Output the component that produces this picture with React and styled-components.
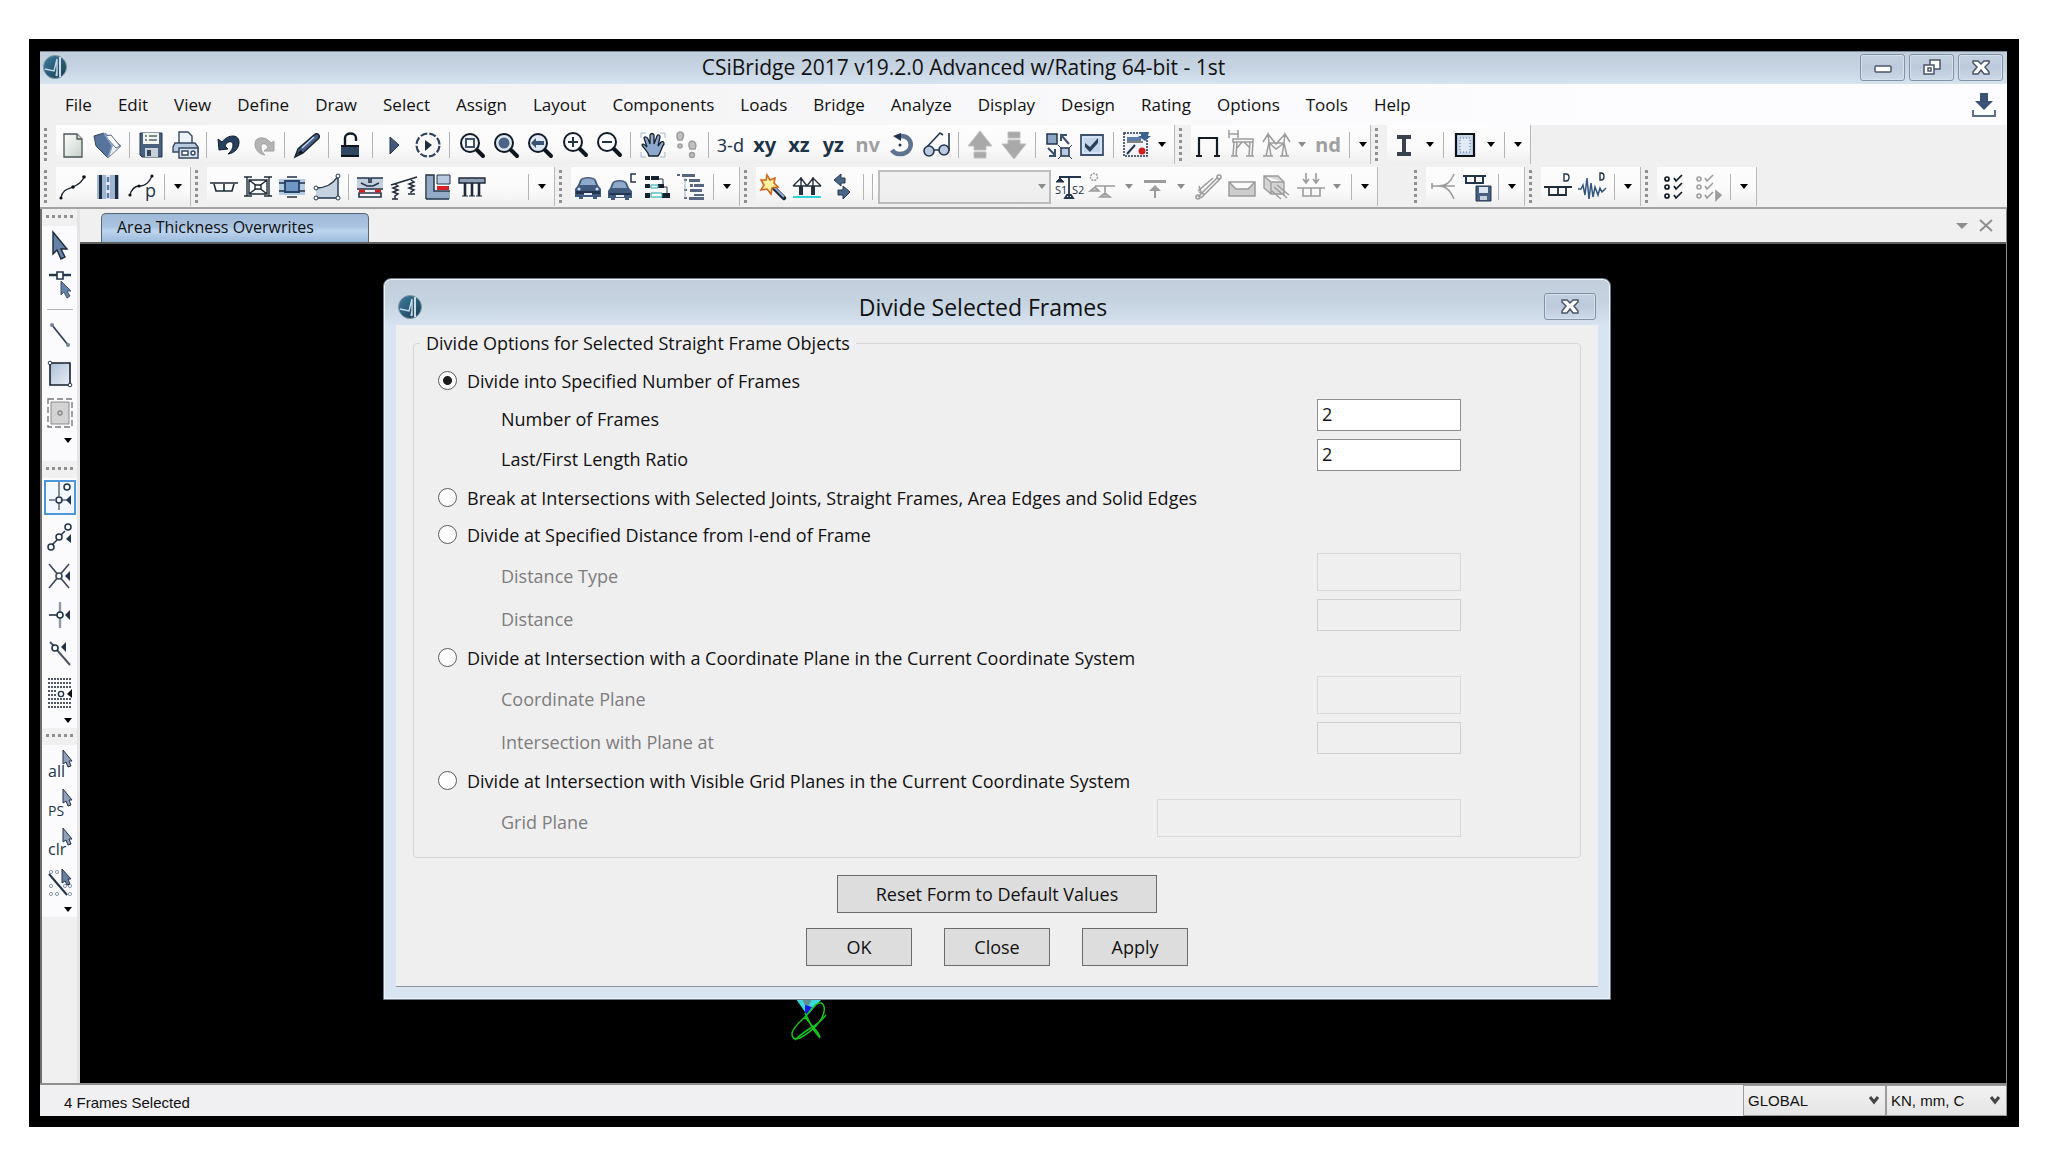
import { useState } from 'react'
import styled, { createGlobalStyle, css } from 'styled-components'

const ink = '#22344a'
const steel = '#5f7fa8'
const pale = '#b9cbe0'
const grey = '#9c9c9c'

const uiFont = '"Open Sans", "Noto Sans", sans-serif'

// Every icon is drawn on a 26 x 26 grid
const icons = {
    newFile: <g stroke="#4b5358" strokeWidth="1.3"><path d="M4 2h13l5 5v18H4z" fill="url(#paper)" /><path d="M17 2v5h5" fill="#cfdbd2" /></g>,
    open: <g><path d="M11 1l16 13-13 12z" fill="#e9eff7" stroke="#6d7f96" /><path d="M17 3l9 11-4 2-11-12z" fill="#f8fafd" stroke="#56687f" /><path d="M0 4l10-3 8 13-4 12L2 14z" fill="#56749c" stroke="#33475f" /><path d="M10 1l8 13-4 12" fill="none" stroke="#8ea8c9" strokeWidth="1.4" /></g>,
    save: <g><path d="M2 1h22v24H4l-2-2z" fill="#48617f" stroke={ink} /><path d="M5 1h16v11H5z" fill="#f2f5ee" /><path d="M7 4h2M11 4h8M7 8h2M11 8h8" stroke="#55656e" strokeWidth="1.4" /><path d="M7 16h13v9H7z" fill="#c8d0d8" /><path d="M9 18h4v6H9z" fill="#34475f" /></g>,
    print: <g stroke="#34475f" strokeWidth="1.4"><path d="M7 0h9l4 4v8H7z" fill="#eef3fa" /><path d="M3 11h20l3 4v5H1v-5z" fill={pale} /><path d="M7 16h19v10H7z" fill="#dbe3ee" /><path d="M10 19h6v4h-6z" fill="#fff" /><circle cx="21" cy="21" r="2" fill="#fff" /></g>,
    undo: <path d="M2 7l1 11 9-1-3-3c2-5 8-6 8-1 0 4-2 6-5 9 7-1 11-6 11-12 0-8-11-8-17 0z" fill="#25415f" stroke="#111b27" />,
    redo: <path d="M24 9l0 10-10 0 4-3c-1-5-7-6-7-1 0 4 2 6 4 8-6-1-10-5-10-11 0-8 11-8 16-1z" fill="#b4b4b4" stroke="#a0a0a0" />,
    pen: <g><path d="M1 25l3-8L20 3c4-3 7 1 4 4L9 21z" fill="#435f85" stroke="#18222f" strokeWidth="1.5" /><path d="M8 16L20 5" stroke="#c2d3e8" strokeWidth="1.5" /><path d="M3 22l4-4 2 3z" fill="#111" /></g>,
    lock: <g><path d="M8 13V6c0-6 11-6 11 0v3" fill="none" stroke="#111b27" strokeWidth="2.4" /><path d="M4 13h18v12H4z" fill="#2f4763" /><path d="M4 13h18v2H4zM4 23h18v2H4z" fill="#0d141c" /></g>,
    play: <path d="M9 5l9 8-9 9z" fill="#42597a" stroke={ink} />,
    run: <g><circle cx="13" cy="13" r="11.5" fill="none" stroke="#30435c" strokeWidth="2.2" strokeDasharray="7 2.03" strokeDashoffset="-1" /><path d="M10 8l7 5-7 6z" fill="#1d2c3f" /></g>,
    zoomRect: <g><circle cx="11" cy="11" r="9" fill="#eef2f6" stroke="#111b27" strokeWidth="2" /><path d="M7 7h8v8H7z" fill="#fff" stroke="#40526a" strokeWidth="2" /><path d="M18 18l6 6" stroke="#0e161f" strokeWidth="4" strokeLinecap="round" /></g>,
    zoomFull: <g><circle cx="11" cy="11" r="9" fill="#dfe8f2" stroke="#111b27" strokeWidth="2" /><circle cx="11" cy="11" r="5.5" fill="#4c6587" /><path d="M18 18l6 6" stroke="#0e161f" strokeWidth="4" strokeLinecap="round" /></g>,
    zoomBack: <g><circle cx="11" cy="11" r="9" fill="#dfe8f2" stroke="#111b27" strokeWidth="2" /><path d="M4 11l5-5v3h8v4H9v3z" fill="#3c5270" /><path d="M18 18l6 6" stroke="#0e161f" strokeWidth="4" strokeLinecap="round" /></g>,
    zoomIn: <g><circle cx="11" cy="10" r="9" fill="#fafcff" stroke="#111b27" strokeWidth="2" /><path d="M6 10h10M11 5v10" stroke={ink} strokeWidth="2" /><path d="M18 17l6 6" stroke="#0e161f" strokeWidth="4" strokeLinecap="round" /></g>,
    zoomOut: <g><circle cx="11" cy="10" r="9" fill="#fafcff" stroke="#111b27" strokeWidth="2" /><path d="M6 10h10" stroke={ink} strokeWidth="2" /><path d="M18 17l6 6" stroke="#0e161f" strokeWidth="4" strokeLinecap="round" /></g>,
    hand: <g><path d="M1 6V1h5M20 1h5v5M25 20v5h-5M6 25H1v-5" fill="none" stroke="#a9b8cc" /><path d="M9 24c-1-5-5-7-7-11 1-2 3 0 5 2L4 6c1-2 3-1 4 1l2 5V3c1-2 3-2 4 0v9l3-8c1-2 3-1 3 1l-2 9 3-4c2-1 3 0 3 2-3 4-3 9-6 12z" fill="#8fa9cc" stroke="#16212e" strokeWidth="1.3" /></g>,
    feet: <g fill="#c0c0c0" stroke="#9f9f9f" strokeWidth="1.6"><path d="M4 8c-2-4-1-8 2-8s5 2 2 8z" /><circle cx="6" cy="14" r="2" /><path d="M16 17c-2-4-1-8 2-8s5 3 3 8z" /><circle cx="18" cy="23" r="2.4" /></g>,
    rotate: <g fill="none"><path d="M11 4c15-1 14 19-1 18-3 0-5-1-7-4" stroke="#5d7390" strokeWidth="4.5" /><path d="M4 4l8-3v8z" fill={ink} /><circle cx="11" cy="13" r="1.5" fill={ink} /></g>,
    glasses: <g stroke="#26364a" strokeWidth="1.6"><path d="M2 17L17 1l3 2M26 1v18M11 18h5" fill="none" /><circle cx="6" cy="19" r="5" fill={pale} /><circle cx="21" cy="18" r="5" fill={pale} /></g>,
    up: <path d="M13-1l12 15h-6v4H7v-4H1zM7 20h12v6H7z" fill="#a9a9a9" stroke="#bdbdbd" />,
    down: <path d="M13 27L1 12h6V8h12v4h6zM7 0h12v6H7z" fill="#a9a9a9" stroke="#bdbdbd" />,
    shrink: <g><path d="M2 2h10v10H2z" fill="#8ea6c5" stroke={ink} strokeWidth="1.5" /><path d="M16 16h8v8h-8z" fill={pale} stroke={ink} strokeWidth="1.5" /><path d="M13 13l3 3M27 13l-3 3M13 27l3-3M27 27l-3-3" stroke={ink} /><path d="M24 12l-7-8M16 9V3h6M3 16l7 7M10 17v7H4" fill="none" stroke="#3c4f68" strokeWidth="2" /></g>,
    check: <g><path d="M2 3h22v20H2z" fill="#c3d5ea" stroke="#3c516d" strokeWidth="1.8" /><path d="M4 5h18v16H4z" fill="none" stroke="#e6eff9" /><path d="M6 11l5 4 8-9v5l-8 9-5-5z" fill="#2c3f58" /></g>,
    assign: <g><path d="M1 1h23v23H1z" fill="#f2f5f9" stroke={ink} strokeWidth="1.5" strokeDasharray="2 1" /><path d="M4 5h14v4H4z" fill={steel} /><path d="M4 10h16" stroke="#111" /><path d="M4 22l8-9" stroke={ink} strokeWidth="2" /><path d="M18 0h8l-1 4h3l-6 5-7-5h3z" fill="#3e628e" /><circle cx="19" cy="19" r="3.5" fill="#cf1f22" /></g>,
    portal: <path d="M1 24h6M4 24V6h18v18M19 24h6" fill="none" stroke="#141c26" strokeWidth="2.2" />,
    portalDim: <g fill="none" stroke={grey} strokeWidth="1.5"><path d="M0-2v8M9-2v8M0 2h9M4 7h20v3H4zM5 10L4 24M8 10L7 24M21 10l-1 14M24 10l-1 14M2 24h7M17 24h8M8 16l5-6M21 16l-6-6" /></g>,
    portalTriangles: <g fill="none" stroke={grey} strokeWidth="1.5"><path d="M0 10L5 2l1 9 7 6 8-6 1-9 5 8M5 2l8 10L22 2M6 11L3 24M6 11l2 13M21 11l-2 13M21 11l3 13M0 24h10M17 24h9M6 11h15" /></g>,
    section: <path d="M6 3h14v4h-5v13h5v4H6v-4h5V7H6z" fill="#39424c" />,
    rebar: <g><path d="M4 2h18v22H4z" fill="#c8d6ea" stroke="#0d1219" strokeWidth="2.2" /><path d="M8 6h10v14H8z" fill="#e1e9f4" stroke="#56708f" strokeDasharray="1 2" /></g>,
    layoutLine: <g><path d="M1 24c1-9 8-9 12-11s9-4 11-10" fill="none" stroke="#1a232e" strokeWidth="1.3" /><circle cx="1" cy="24" r="1.6" fill="#111" /><circle cx="13" cy="13" r="1.8" fill="#111" /><circle cx="24" cy="3" r="1.8" fill="#111" /></g>,
    lane: <g><path d="M2 1h22v24H2z" fill="#9eb5d3" /><path d="M4 1h3v24H4zM20 1h3v24h-3z" fill="#1d2b3c" /><path d="M13 1v24" stroke="#dfe8f3" strokeWidth="4" /><path d="M13 3v21" stroke="#5c7aa2" strokeWidth="2.4" strokeDasharray="5 3" /></g>,
    parametric: <g><path d="M1 21c2-8 6-9 10-9s9-3 12-10" fill="none" stroke="#1a232e" strokeWidth="1.3" /><circle cx="1" cy="21" r="1.6" fill="#111" /><circle cx="10" cy="12" r="1.6" fill="#111" /><circle cx="23" cy="2" r="1.6" fill="#111" /><text x="16" y="23" fontSize="18" fill={ink}>p</text></g>,
    deck: <path d="M-1 9h28M3 10l2 7h16l2-7M13 10v7" fill="none" stroke="#1f2b39" strokeWidth="1.6" />,
    diaphragm: <g fill="none" stroke="#1f2b39" strokeWidth="1.4"><path d="M-1 3h8M19 3h8M-1 22h8M19 22h8M2 3v19M24 3v19M4 6h18v14H4zM4 6l18 14M22 6L4 20" /><path d="M10 11h6v4h-6z" fill="#fff" /></g>,
    restrainer: <g><path d="M0 5h26v16H0z" fill="#b3cbe5" /><path d="M6 7h14v11H6z" fill="#6f96c4" stroke="#274262" strokeWidth="1.8" /><path d="M8 3h10M8 23h10M0 9h6M20 9h6M0 17h6M20 17h6" stroke="#223247" strokeWidth="1.6" /></g>,
    variation: <g><path d="M2 14c9 0 17-4 22-12v22H2z" fill="#c6d2e0" /><path d="M2 14c9 0 17-4 22-12M24 2v22M2 24h22" fill="none" stroke={ink} strokeWidth="1.4" /><circle cx="2" cy="14" r="2" fill="#fff" stroke={ink} /><circle cx="24" cy="2" r="2" fill="#fff" stroke={ink} /><circle cx="2" cy="24" r="2" fill="#fff" stroke={ink} /><circle cx="24" cy="24" r="2" fill="#fff" stroke={ink} /></g>,
    bearing: <g><path d="M0 4h26v11H0z" fill="#c3cfdd" /><path d="M0 4h12v5M26 4H14v5M0 15h26M2 19h22v4H2z" fill="none" stroke={ink} strokeWidth="1.6" /><path d="M4 9l6 3h6l6-3" fill="none" stroke={ink} strokeWidth="1.6" /><path d="M2 17h6M18 17h6" stroke="#cf2128" strokeWidth="3" /></g>,
    spring: <g fill="none" stroke="#1f2b39" strokeWidth="1.5"><path d="M0 11L26 3M4 10l3 2-5 2 5 2-5 2 5 2-3 2v3M20 6l3 2-5 2 5 2-5 2 5 2-3 2v1M1 25h6M17 20h7" /></g>,
    abutment: <g><path d="M2 1h7v16h16v8H2z" fill="#93aac6" /><path d="M1 25V1h8v16h16M1 25h23" fill="none" stroke={ink} strokeWidth="1.5" /><path d="M12 1h13v9H12z" fill={pale} stroke={ink} /><path d="M12 14h12" stroke="#d62128" strokeWidth="4" /></g>,
    bent: <g><path d="M0 4h26v5H0z" fill="#8fa0b5" stroke="#1c2938" strokeWidth="1.4" /><path d="M6 9v13M13 9v13M20 9v13" stroke="#1f2b39" strokeWidth="2.6" /><path d="M3 22h6M10 22h6M17 22h6" stroke="#1f2b39" /></g>,
    car: <g><path d="M5 6c2-4 14-4 16 0l2 5 3 4v8h-4v2h-4v-2H8v2H4v-2H0v-8l3-4z" fill="#405a7d" /><path d="M7 6c2-2 10-2 12 0l2 5H5z" fill="#8fa9cb" /><path d="M1 17h24v3H1z" fill="#24364d" /><path d="M9 19h8v2H9z" fill="#e6edf6" /><circle cx="4" cy="15" r="1.5" fill="#cfe0f4" /><circle cx="22" cy="15" r="1.5" fill="#cfe0f4" /></g>,
    carClass: <g><path d="M3 9c2-4 13-4 15 0l2 5 3 3v7h-3v2h-4v-2H6v2H2v-2h-3v-7l2-3z" fill="#405a7d" /><path d="M5 9c2-2 9-2 11 0l2 5H3z" fill="#8fa9cb" /><path d="M0 19h22v2H0z" fill="#24364d" /><path d="M7 21h8v2H7z" fill="#e6edf6" /><path d="M27 0h-5v8h5" fill="none" stroke={ink} strokeWidth="1.5" /></g>,
    cases: <g fill="#18222e"><path d="M1 2h5v4H1zM7 2h8v4H7zM1 10h5v4H1zM14 10h6v4h-6zM1 19h5v5H1zM18 19h8v5h-8z" /><path d="M7 11h7v3H7zM7 19h11v4H7z" fill="#fff" stroke="#12a5a8" /><path d="M15 5h4v5M20 13h3v6" fill="none" stroke={ink} /></g>,
    tree: <g fill="#56687f"><path d="M-1 0h3v2h-3zM4 0h13v3H4zM6 5h3v2H6zM11 5h11v3H11zM12 10h3v3h-3zM16 10h10v3H16zM6 15h3v2H6zM12 15h12v3H12zM6 23h3v2H6zM16 20h10v2H16zM11 23h15v3H11z" /><path d="M7 4v20" stroke="#9db0c9" fill="none" /></g>,
    wand: <g><path d="M13 13l11 11" stroke="#1a2737" strokeWidth="4.5" strokeLinecap="round" /><path d="M14 13l10 10" stroke="#92a8cd" strokeWidth="2" /><path d="M7 1l3 5 5-2-1 5 4 4-6 1-1 6-4-5-6 1 3-5-3-5 5 0z" fill="#fff0a0" stroke="#d2641c" strokeWidth="1.6" /></g>,
    bridge: <g fill="none" stroke="#26303b" strokeWidth="1.4"><path d="M-1 12h28M-1 12l8-8 6 8 6-8 8 8M7 3v9M19 3v9" /><path d="M6 12v9M8 12v9M18 12v9M20 12v9" strokeWidth="2" /><path d="M-1 23h28" stroke="#2fd3d8" strokeWidth="2" /></g>,
    swap: <path d="M5 6l7-6v4h4v5h-4v3zM21 18l-7-6v4H9v5h5v4z" fill="#4d6789" stroke="#25364b" />,
    balance: <g stroke={ink} fill={ink}><path d="M4 3h22M14 3v20M10 24h8l-2-3h-4z" fill="none" strokeWidth="1.8" /><path d="M1 8l4-4 4 4z" /><text x="0" y="20" fontSize="11" strokeWidth="0">S1</text><text x="17" y="20" fontSize="11" strokeWidth="0">S2</text></g>,
    loadNew: <g stroke={grey} fill="none" strokeWidth="1.6"><circle cx="5" cy="3" r="3.5" strokeDasharray="2 1" /><path d="M6 12h20M16 12v9M1 17l5-4 4 4zM11 23h10l-5-4z" fill="#bcbcbc" /></g>,
    loadUp: <g fill={grey}><path d="M2 6h22v3H2zM13 11l6 6h-5v7h-2v-7H7z" /></g>,
    tendon: <g fill="none" stroke={grey} strokeWidth="1.6"><path d="M3 23L23 3M6 24L25 5M4 12l2 6M3 17l15-13M4 18l5 2" /><circle cx="24" cy="3" r="2" /><circle cx="3" cy="23" r="2" /></g>,
    envelope: <g fill="#cdcdcd" stroke={grey} strokeWidth="1.5"><path d="M0 8h26v14H0zM0 8l7 7h12l7-7" /></g>,
    box: <g fill="#d5d5d5" stroke={grey} strokeWidth="1.4"><path d="M1 2h14l6 6v12H8l-7-6zM1 2l7 6h13M8 8v12M11 13l13 11M14 11l12 10M9 17l9 8" /></g>,
    boxLoad: <path d="M8-1v9M18-1v9M5 5l3 4 3-4M15 5l3 4 3-4M-1 14h28M5 14v8h17v-8M13 14v8" fill="none" stroke={grey} strokeWidth="1.6" />,
    flow: <path d="M2 12h23M2 9v6M8 12c8 0 12-3 16-12M8 12c8 0 12 4 16 13" fill="none" stroke={grey} strokeWidth="1.6" />,
    saveBridge: <g><path d="M-1 2h23M2 2v7h17V2M11 2v7" fill="none" stroke={ink} strokeWidth="2" /><path d="M12 12h15v15H12z" fill="#48617f" stroke={ink} /><path d="M15 13h9v6h-9z" fill="#dbe6f3" /><path d="M16 22h7v4h-7z" fill="#c3d0df" /></g>,
    deckD: <g><path d="M-1 13h28M4 13v8h17v-8M13 13v8" fill="none" stroke="#1f2b39" strokeWidth="1.8" /><path d="M19 0h2c4 0 4 7 0 7h-2z" fill="none" stroke={ink} strokeWidth="1.4" /></g>,
    waveD: <g fill="none"><path d="M-1 15h3l2-4 2 10 2-17 2 21 2-16 2 14 2-10 3 8 2-7 2 4 4-4" stroke="#33557f" strokeWidth="1.5" /><path d="M21-1h1c4 0 4 7 0 7h-1z" stroke={ink} strokeWidth="1.4" /></g>,
    checks: <g fill="none" stroke="#0f1720" strokeWidth="1.7"><circle cx="6" cy="5" r="2" /><circle cx="6" cy="13" r="2" /><circle cx="6" cy="22" r="2" /><path d="M13 4l2 3 6-6M13 12l2 3 6-6M13 21l2 3 6-6" /></g>,
    checksRun: <g fill="none" stroke={grey} strokeWidth="1.6"><circle cx="4" cy="5" r="2" /><circle cx="4" cy="13" r="2" /><circle cx="4" cy="22" r="2" /><path d="M10 4l2 3 6-6M10 12l2 3 6-6M10 21l2 3 6-6" /><path d="M21 17l5 4-5 5z" fill={grey} /></g>,
    // side rail
    pointer: <path d="M6-1v22l4-4 4 9 4-2-4-8h6z" fill="#6782a8" stroke="#1c2a3b" strokeWidth="1.4" />,
    reshape: <g><path d="M2 3h22" stroke={ink} strokeWidth="2.4" /><path d="M10 0h6v7h-6z" fill="#fff" stroke={ink} strokeWidth="1.6" /><path d="M14 9v14l3-3 3 6 3-2-3-5h4z" fill="#6782a8" stroke="#40536d" /></g>,
    line: <g><path d="M5 3l16 20" stroke="#34425a" strokeWidth="1.8" /><circle cx="5" cy="3" r="2" fill="#76859d" /><circle cx="21" cy="23" r="2" fill="#76859d" /></g>,
    area: <g><path d="M3 2h20v22H3z" fill="url(#areaFill)" stroke="#16202c" strokeWidth="1.6" /><circle cx="3" cy="2" r="1.8" fill="#fff" stroke={ink} /><circle cx="23" cy="24" r="1.8" fill="#fff" stroke={ink} /></g>,
    areaQuick: <g><path d="M1-1h24v28H1z" fill="none" stroke="#777" strokeWidth="1.4" strokeDasharray="6 3" /><path d="M4 2h18v22H4z" fill="#d3d3d3" stroke="#8a8a8a" /><circle cx="13" cy="13" r="2" fill="none" stroke="#888" strokeWidth="1.4" /></g>,
    snapPoint: <g fill="none" stroke={ink} strokeWidth="1.5"><path d="M12-3v14M12 18v7M2 15h6M15 15h5" stroke="#5f6b7b" /><circle cx="12" cy="15" r="3" /><circle cx="20" cy="2" r="3" /><path d="M24 10v10l-5-5z" fill={ink} stroke="none" /></g>,
    snapEnds: <g fill="none" stroke={ink} strokeWidth="1.5"><path d="M5 21l5-5M14 11l4-4" /><circle cx="4" cy="23" r="3" /><circle cx="12" cy="13" r="3" /><circle cx="21" cy="3" r="3" /><path d="M24 10v9l-5-4z" fill={ink} stroke="none" /></g>,
    snapCross: <g fill="none" stroke="#3c4757" strokeWidth="1.6"><path d="M2 1l20 24M22 1L2 25" /><circle cx="12" cy="13" r="3" fill="#fff" /><path d="M23 8v10l-5-5z" fill={ink} stroke="none" /></g>,
    snapPerp: <g fill="none" stroke={ink} strokeWidth="1.6"><path d="M13 0v26" stroke="#8f99a8" strokeWidth="2.4" /><path d="M2 13h9" /><circle cx="13" cy="13" r="3" fill="#fff" /><path d="M23 8v10l-5-5z" fill={ink} stroke="none" /></g>,
    snapLine: <g fill="none" stroke={ink} strokeWidth="1.6"><path d="M3 1l4 4M10 9l13 15" stroke="#4b5766" strokeWidth="2" /><circle cx="8" cy="7" r="3" fill="#fff" /><path d="M19 1v10l-5-5z" fill={ink} stroke="none" /></g>,
    snapGrid: <g><path d="M1-1h24M1 3h24M1 7h24M1 11h24M1 15h24M1 19h24M1 23h24M1 27h24" stroke="#1a232e" strokeWidth="1.4" strokeDasharray="2 1" /><path d="M10 9h15v9H10z" fill="#fff" /><circle cx="14" cy="14" r="2.6" fill="none" stroke={ink} strokeWidth="1.4" /><path d="M25 9v9l-5-4z" fill="#111" /></g>,
    selAll: <g><text x="1" y="25" fontSize="16" fill={ink}>all</text><path d="M16-2v14l3-2 2 5 3-1-2-5h3z" fill="#8fa0b8" stroke={ink} /></g>,
    selPs: <g><text x="1" y="25" fontSize="14" fill={ink}>PS</text><path d="M16-2v14l3-2 2 5 3-1-2-5h3z" fill="#8fa0b8" stroke={ink} /></g>,
    selClr: <g><text x="1" y="25" fontSize="16" fill={ink}>clr</text><path d="M16-2v14l3-2 2 5 3-1-2-5h3z" fill="#8fa0b8" stroke={ink} /></g>,
    selLine: <g><g fill="none" stroke="#8b97a8"><circle cx="4" cy="3" r="1.6" /><circle cx="10" cy="3" r="1.6" /><circle cx="4" cy="17" r="1.6" /><circle cx="4" cy="25" r="1.6" /><circle cx="10" cy="25" r="1.6" /><circle cx="18" cy="17" r="1.6" /><circle cx="23" cy="17" r="1.6" /><circle cx="23" cy="25" r="1.6" /></g><path d="M2 5l18 21" stroke={ink} strokeWidth="2" /><path d="M15 0v14l3-2 2 4 3-1-2-5h3z" fill="#6a7f9e" stroke={ink} /></g>,
}

const menus = ['File', 'Edit', 'View', 'Define', 'Draw', 'Select', 'Assign', 'Layout', 'Components', 'Loads', 'Bridge', 'Analyze', 'Display', 'Design', 'Rating', 'Options', 'Tools', 'Help']

// '|' is a separator, 'v' a drop-down arrow, '_' an empty slot, '=label' a text button
const topBars = [
    { name: 'Main', width: 1135, items: ['newFile', 'open', '|', 'save', 'print', '|', 'undo', 'redo', '|', 'pen', '|', 'lock', '|', 'play', 'run', '|', 'zoomRect', 'zoomFull', 'zoomBack', 'zoomIn', 'zoomOut', '|', 'hand', 'feet', '|', '=3-d', '=xy', '=xz', '=yz', '=nv', 'rotate', 'glasses', '|', 'up', 'down', '|', 'shrink', 'check', '|', 'assign', 'v'] },
    { name: 'Display', width: 196, items: ['portal', 'portalDim', 'portalTriangles', 'v-', '=nd', '|', 'v'] },
    { name: 'Section', width: 160, items: ['section', 'v', '|', 'rebar', 'v', '|', 'v'] },
]

const bottomBars = [
    { name: 'Layout', width: 151, items: ['layoutLine', 'lane', 'parametric', '|', 'v'] },
    { name: 'Components', width: 364, items: ['deck', 'diaphragm', 'restrainer', 'variation', '|', 'bearing', 'spring', 'abutment', 'bent', '_', '|', 'v'] },
    { name: 'Loads', width: 185, items: ['car', 'carClass', 'cases', 'tree', '|', 'v'] },
    { name: 'Bridge', width: 638, items: ['wand', 'bridge', 'swap', '|', '|', 'combo', 'balance', 'loadNew', 'v-', 'loadUp', 'v-', 'tendon', 'envelope', 'box', 'boxLoad', 'v-', '|', 'v'] },
    { name: 'Analyze', width: 115, spaced: true, items: ['flow', 'saveBridge', '|', 'v'] },
    { name: 'Design', width: 116, items: ['deckD', 'waveD', '|', 'v'] },
    { name: 'Rating', width: 116, items: ['checks', 'checksRun', '|', 'v'] },
]

const railBars = [
    { name: 'Draw', items: ['pointer', 'reshape', '|', 'line', 'area', 'areaQuick', 'v'] },
    { name: 'Snap', items: ['snapPoint', 'snapEnds', 'snapCross', 'snapPerp', 'snapLine', 'snapGrid', 'v'] },
    { name: 'Select', items: ['selAll', 'selPs', 'selClr', 'selLine', 'v'] },
]

const options = [
    {
        id: 'number',
        label: 'Divide into Specified Number of Frames',
        fields: [
            { id: 'frames', label: 'Number of Frames', value: '2' },
            { id: 'ratio', label: 'Last/First Length Ratio', value: '2' },
        ],
    },
    { id: 'break', label: 'Break at Intersections with Selected Joints, Straight Frames, Area Edges and Solid Edges', fields: [] },
    {
        id: 'distance',
        label: 'Divide at Specified Distance from I-end of Frame',
        fields: [
            { id: 'distanceType', label: 'Distance Type', select: true },
            { id: 'distanceValue', label: 'Distance', value: '' },
        ],
    },
    {
        id: 'plane',
        label: 'Divide at Intersection with a Coordinate Plane in the Current Coordinate System',
        fields: [
            { id: 'coordPlane', label: 'Coordinate Plane', select: true },
            { id: 'planeAt', label: 'Intersection with Plane at', value: '' },
        ],
    },
    {
        id: 'grid',
        label: 'Divide at Intersection with Visible Grid Planes in the Current Coordinate System',
        fields: [{ id: 'gridPlane', label: 'Grid Plane', select: true, wide: true }],
    },
]

function Icon({ name }) {
    return <Glyph viewBox="0 0 26 26" aria-hidden="true">{icons[name]}</Glyph>
}

function Caret({ faded }) {
    return (
        <CaretGlyph viewBox="0 0 8 5" aria-hidden="true">
            <path d="M0 0h8L4 5z" fill={faded ? '#8c8c8c' : '#000'} />
        </CaretGlyph>
    )
}

function CloseGlyph() {
    return (
        <svg width="18" height="15" viewBox="0 0 18 15" aria-hidden="true">
            <path d="M1 1h5l3 3 3-3h5v2l-4 4 4 5v2h-5l-3-4-3 4H1v-2l4-5-4-4z" fill="#fff" stroke="#4a5568" strokeWidth="1.5" />
        </svg>
    )
}

function Logo() {
    return (
        <LogoGlyph viewBox="0 0 24 24" aria-hidden="true">
            <circle cx="12" cy="12" r="11.5" fill="url(#logoFill)" stroke="#7f97a6" />
            <path d="M2 14l9 2 3-12v17M14 16l-1 5" fill="none" stroke="#c3d9e6" strokeWidth="1.4" />
            <path d="M17 2v20" stroke="#dcebf3" strokeWidth="1.8" />
        </LogoGlyph>
    )
}

function ToolItem({ item, active }) {
    if (item === '|') return <Divider />
    if (item === '_') return <Blank />
    if (item === 'v' || item === 'v-') {
        return <ArrowButton type="button" aria-label="More"><Caret faded={item === 'v-'} /></ArrowButton>
    }
    if (item === 'combo') {
        return (
            <ComboWrap>
                <Combo aria-label="Bridge object" disabled />
                <ComboArrow><Caret faded /></ComboArrow>
            </ComboWrap>
        )
    }
    if (item[0] === '=') {
        const text = item.slice(1)
        return <TextTool type="button" $thin={text === '3-d'} $off={text[0] === 'n'}>{text}</TextTool>
    }
    return <Tool type="button" aria-label={item} $active={active}><Icon name={item} /></Tool>
}

function Bar({ bar }) {
    return (
        <ToolGroup role="toolbar" aria-label={bar.name} $width={bar.width} $spaced={bar.spaced}>
            <Grip />
            <ToolItems>
                {bar.items.map((item, i) => <ToolItem key={i} item={item} />)}
            </ToolItems>
        </ToolGroup>
    )
}

function DivideDialog() {
    const [picked, setPicked] = useState('number')

    return (
        <Dialog role="dialog" aria-labelledby="dialog-title">
            <DialogBar>
                <Logo />
                <DialogTitle id="dialog-title">Divide Selected Frames</DialogTitle>
                <CaptionButton type="button" aria-label="Close dialog" $wide><CloseGlyph /></CaptionButton>
            </DialogBar>
            <DialogBody>
                <Group>
                    <Legend>Divide Options for Selected Straight Frame Objects</Legend>
                    {options.map(option => (
                        <div key={option.id}>
                            <RadioRow>
                                <Radio type="radio" name="divide" checked={picked === option.id} onChange={() => setPicked(option.id)} />
                                {option.label}
                            </RadioRow>
                            {option.fields.map(field => (
                                <FieldRow key={field.id} $tall={field.select}>
                                    <FieldLabel htmlFor={field.id} $off={picked !== option.id}>{field.label}</FieldLabel>
                                    {field.select
                                        ? <FieldSelect id={field.id} $wide={field.wide} disabled={picked !== option.id} />
                                        : <FieldInput id={field.id} defaultValue={field.value} disabled={picked !== option.id} />}
                                </FieldRow>
                            ))}
                        </div>
                    ))}
                </Group>
                <Buttons>
                    <PushButton type="button" $wide>Reset Form to Default Values</PushButton>
                </Buttons>
                <Buttons>
                    <PushButton type="button">OK</PushButton>
                    <PushButton type="button">Close</PushButton>
                    <PushButton type="button">Apply</PushButton>
                </Buttons>
            </DialogBody>
        </Dialog>
    )
}

export default function App() {
    return (
        <Desk>
            <GlobalStyle />
            <Defs aria-hidden="true">
                <defs>
                    <linearGradient id="paper" x1="0" y1="0" x2="1" y2="1"><stop offset="0" stopColor="#fff" /><stop offset="1" stopColor="#c5d0c6" /></linearGradient>
                    <linearGradient id="areaFill" x1="0" y1="0" x2="1" y2="1"><stop offset="0" stopColor="#aebfd6" /><stop offset="1" stopColor="#e8eef6" /></linearGradient>
                    <linearGradient id="logoFill" x1="0" y1="0" x2="1" y2="1"><stop offset="0" stopColor="#3e7ea0" /><stop offset="1" stopColor="#17394f" /></linearGradient>
                </defs>
            </Defs>
            <Window>
                <TitleBar>
                    <Logo />
                    <Title>CSiBridge 2017 v19.2.0 Advanced w/Rating 64-bit - 1st</Title>
                    <Captions>
                        <CaptionButton type="button" aria-label="Minimize">
                            <svg width="18" height="14" viewBox="0 0 18 14"><rect x="1" y="6" width="16" height="6" rx="1" fill="#fff" stroke="#4a5568" strokeWidth="1.5" /></svg>
                        </CaptionButton>
                        <CaptionButton type="button" aria-label="Restore">
                            <svg width="18" height="16" viewBox="0 0 18 16"><g fill="#fff" stroke="#4a5568" strokeWidth="1.5"><path d="M7 1h10v9H7z" /><path d="M1 6h10v9H1z" /><path d="M5 9h3v3H5z" /></g></svg>
                        </CaptionButton>
                        <CaptionButton type="button" aria-label="Close"><CloseGlyph /></CaptionButton>
                    </Captions>
                </TitleBar>

                <MenuBar>
                    {menus.map(menu => <MenuItem type="button" key={menu}>{menu}</MenuItem>)}
                    <Download type="button" aria-label="Download updates">
                        <svg width="24" height="24" viewBox="0 0 24 24"><path d="M8 0h8v8h5l-9 9-9-9h5z" fill="#3b5475" /><path d="M1 17v6h22v-6" fill="none" stroke="#5a6f8a" strokeWidth="2" /></svg>
                    </Download>
                </MenuBar>

                <Toolbars>
                    <ToolRow>{topBars.map(bar => <Bar key={bar.name} bar={bar} />)}</ToolRow>
                    <ToolRow>{bottomBars.map(bar => <Bar key={bar.name} bar={bar} />)}</ToolRow>
                </Toolbars>

                <Work>
                    <Rail>
                        {railBars.map(bar => (
                            <RailGroup key={bar.name} role="toolbar" aria-label={bar.name}>
                                <RailGrip />
                                {bar.items.map((item, i) => <ToolItem key={i} item={item} active={item === 'snapPoint'} />)}
                            </RailGroup>
                        ))}
                    </Rail>
                    <Main>
                        <TabStrip>
                            <Tab type="button">Area Thickness Overwrites</Tab>
                            <TabTools>
                                <svg width="12" height="6" viewBox="0 0 12 6"><path d="M0 0h12L6 6z" fill="#8e8e8e" /></svg>
                                <svg width="14" height="13" viewBox="0 0 14 13"><path d="M1 1l12 11M13 1L1 12" stroke="#8e8e8e" strokeWidth="2" /></svg>
                            </TabTools>
                        </TabStrip>
                        <Canvas>
                            <Model viewBox="0 0 36 42" aria-hidden="true">
                                <path d="M5 0h26L16 16z" fill="#3fd6dc" /><path d="M11 0h10l-5 10z" fill="#5d8f95" /><path d="M14 6v12l7-10z" fill="#1414e8" />
                                <path d="M14 18C5 26 1 32 1 35c0 4 2 6 8 4 9-5 15-10 20-17 5-7 6-16 1-18-5-1-8 6-16 14l13 16 2 4M14 14l8 16 7 9M4 41c6-6 12-10 19-14 6-4 9-7 12-11" fill="none" stroke="#12c41c" strokeWidth="1.5" />
                            </Model>
                            <DivideDialog />
                        </Canvas>
                    </Main>
                </Work>

                <StatusBar>
                    <StatusText>4 Frames Selected</StatusText>
                    <StatusPick $width={143}>
                        <StatusSelect aria-label="Coordinate system"><option>GLOBAL</option></StatusSelect>
                        <Chevron viewBox="0 0 10 9"><path d="M1 1l4 5 4-5" /></Chevron>
                    </StatusPick>
                    <StatusPick $width={121}>
                        <StatusSelect aria-label="Units"><option>KN, mm, C</option></StatusSelect>
                        <Chevron viewBox="0 0 10 9"><path d="M1 1l4 5 4-5" /></Chevron>
                    </StatusPick>
                </StatusBar>
            </Window>
        </Desk>
    )
}

const GlobalStyle = createGlobalStyle`
    * {
        box-sizing: border-box;
    }

    body {
        margin: 0;
        background: #fff;
        color: #111;
        font-family: ${uiFont};
        font-size: 17px;
    }

    button, input, select {
        font: inherit;
        color: inherit;
        border-radius: 0;
    }

    svg {
        flex: none;
        overflow: visible;
    }
`;

const Desk = styled.div`
    height: 100vh;
    padding: 39px 29px 25px;
`;

const Defs = styled.svg`
    position: absolute;
    width: 0;
    height: 0;
`;

const Window = styled.div`
    height: 100%;
    display: flex;
    flex-direction: column;
    border: 12px solid #000;
    border-bottom-width: 11px;
    border-left-width: 11px;
    background: #f0f0f1;
`;

const TitleBar = styled.header`
    flex: none;
    height: 33px;
    display: flex;
    align-items: center;
    padding: 0 4px 2px 3px;
    border-top: 1px solid #7b8692;
    background: linear-gradient(#c0cddb, #c6d3e2 50%, #d6e3f0);
`;

const Title = styled.h1`
    flex: 1;
    margin: 0;
    text-align: center;
    font-size: 21px;
    font-weight: 400;
    line-height: 28px;
`;

const LogoGlyph = styled.svg`
    width: 24px;
    height: 24px;
`;

const Captions = styled.div`
    display: flex;
    gap: 4px;
`;

const CaptionButton = styled.button`
    width: ${props => props.$wide ? 52 : 45}px;
    height: 27px;
    display: flex;
    align-items: center;
    justify-content: center;
    padding: 0;
    border: 1px solid #8292a8;
    border-radius: 3px;
    background: linear-gradient(#c3d0e0, #bccadb 50%, #ccd9e8);
    box-shadow: inset 0 0 0 1px #d7e1ec;
`;

const MenuBar = styled.nav`
    flex: none;
    height: 41px;
    display: flex;
    align-items: center;
    padding: 0 9px 0 12px;
    background: linear-gradient(90deg, #f0f0f1, #fdfdff 80%);
`;

const MenuItem = styled.button`
    padding: 0 13px;
    border: 0;
    background: none;
    line-height: 24px;
`;

const Download = styled.button`
    display: flex;
    margin-left: auto;
    padding: 0 2px;
    border: 0;
    background: none;
`;

const Toolbars = styled.div`
    flex: none;
    display: flex;
    flex-direction: column;
    gap: 3px;
    padding-bottom: 1px;
    border-bottom: 2px solid #a3a3a3;
`;

const ToolRow = styled.div`
    display: flex;
`;

const ToolGroup = styled.div`
    flex: none;
    width: ${props => props.$width}px;
    height: 39px;
    display: flex;
    margin-left: ${props => props.$spaced ? 32 : 0}px;
    padding-right: 3px;
    border-right: 1px solid #b9b9bb;
    background: linear-gradient(#fdfdfe, #fafafb 60%, #eeeeef);
`;

const Grip = styled.div`
    flex: none;
    width: 16px;
    padding: 3px 9px 3px 4px;
    background: #f0f0f1;

    &::before {
        content: '';
        display: block;
        height: 100%;
        background: repeating-linear-gradient(#8f8f8f 0 3px, transparent 3px 6px);
    }
`;

const ToolItems = styled.div`
    flex: 1;
    display: flex;
    align-items: center;
    justify-content: space-between;
`;

const Tool = styled.button`
    flex: none;
    width: 34px;
    height: 36px;
    display: flex;
    align-items: center;
    justify-content: center;
    padding: 0;
    border: 0;
    background: none;
    ${props => props.$active && css`
        box-shadow: inset 0 0 0 2px #4f97dc;
        background: #f3f8fe;
    `}
`;

const TextTool = styled(Tool)`
    font-family: "Noto Sans", sans-serif;
    font-size: ${props => props.$thin ? 18 : 20}px;
    font-weight: ${props => props.$thin ? 400 : 700};
    color: ${props => props.$off ? '#a0a0a0' : '#1d3347'};
`;

const Glyph = styled.svg`
    width: 26px;
    height: 26px;
`;

const Divider = styled.div`
    flex: none;
    width: 9px;
    height: 26px;
    border-right: 4px solid transparent;
    border-left: 4px solid transparent;
    background: #b3b3b3;
    background-clip: padding-box;
`;

const Blank = styled.div`
    width: 34px;
`;

const ArrowButton = styled.button`
    flex: none;
    width: 18px;
    height: 36px;
    display: flex;
    align-items: center;
    justify-content: center;
    padding: 0;
    border: 0;
    background: none;
`;

const CaretGlyph = styled.svg`
    width: 8px;
    height: 5px;
`;

const ComboWrap = styled.div`
    position: relative;
    flex: none;
    width: 173px;
    height: 34px;
`;

const Combo = styled.select`
    appearance: none;
    width: 100%;
    height: 100%;
    border: 2px solid #a5a5a5;
    background: #ececec;
`;

const ComboArrow = styled.span`
    position: absolute;
    top: 14px;
    right: 5px;
    display: flex;
`;

const Work = styled.div`
    flex: 1;
    min-height: 0;
    display: flex;
`;

const Rail = styled.aside`
    flex: none;
    width: 40px;
    border-right: 3px solid #e4e4e6;
    border-left: 2px solid #6d6d6d;
    background: #f0f0f1;
`;

const RailGroup = styled.div`
    display: flex;
    flex-direction: column;
    align-items: center;
    background: #fbfbfd;

    ${Tool} {
        height: 35px;
        width: 32px;
        margin: 2px 0;
    }

    ${Divider} {
        width: 26px;
        height: 11px;
        border: 0 solid transparent;
        border-width: 5px 0;
    }

    ${ArrowButton} {
        height: 16px;
        align-self: flex-end;
    }

    &:first-child {
        padding-bottom: 13px;
    }
`;

const RailGrip = styled.div`
    align-self: stretch;
    height: 17px;
    padding: 6px 1px 8px 4px;
    background: #f0f0f1;

    &::before {
        content: '';
        display: block;
        height: 3px;
        background: repeating-linear-gradient(90deg, #8f8f8f 0 3px, transparent 3px 6px);
    }
`;

const Main = styled.main`
    flex: 1;
    min-width: 0;
    display: flex;
    flex-direction: column;
    border-right: 1px solid #8a8a8a;
`;

const TabStrip = styled.div`
    flex: none;
    height: 35px;
    display: flex;
    align-items: flex-end;
    justify-content: space-between;
    padding: 0 13px 0 21px;
    border-bottom: 2px solid #5e5e5e;
`;

const Tab = styled.button`
    width: 268px;
    height: 29px;
    padding: 0 15px 2px;
    border: 1px solid #5b6470;
    border-bottom: 0;
    border-radius: 5px 5px 0 0;
    background: linear-gradient(#9fb9d8, #a9c3e0 45%, #bdd5ee 60%, #9dbbdd);
    font-size: 16px;
    line-height: 24px;
    text-align: left;
`;

const TabTools = styled.div`
    display: flex;
    align-items: center;
    align-self: center;
    gap: 11px;
`;

const Canvas = styled.section`
    position: relative;
    flex: 1;
    background: #000;
`;

const Model = styled.svg`
    position: absolute;
    top: 755px;
    left: 711px;
    width: 36px;
    height: 42px;
`;

const Dialog = styled.div`
    position: absolute;
    top: 34px;
    left: 303px;
    width: 1228px;
    padding: 0 12px 12px;
    border: 1px solid #6f7b88;
    border-radius: 8px 8px 0 0;
    background: linear-gradient(#c2cedb, #c6d3e1 24px, #d8e4f1 48px);
    box-shadow: inset 0 0 0 1px #eef3f8;
`;

const DialogBar = styled.div`
    height: 46px;
    display: flex;
    align-items: center;
    padding: 11px 2px 2px;
`;

const DialogTitle = styled.h2`
    flex: 1;
    margin: 0;
    text-align: center;
    font-size: 23px;
    font-weight: 400;
    line-height: 28px;
`;

const DialogBody = styled.form`
    padding: 4px 17px 20px;
    border-bottom: 1px solid #8d949c;
    background: #f0eff0;
    font-size: 18px;
`;

const Group = styled.fieldset`
    min-width: 0;
    margin: 0 0 17px;
    padding: 5px 119px 12px 24px;
    border: 1px solid #d6d6d9;
    border-radius: 4px;
`;

const Legend = styled.legend`
    margin-left: -18px;
    padding: 0 6px;
    line-height: 28px;
`;

const RadioRow = styled.label`
    height: 37px;
    display: flex;
    align-items: center;
    gap: 10px;
`;

const Radio = styled.input`
    appearance: none;
    width: 19px;
    height: 19px;
    margin: 0;
    border: 1px solid #5c5c5c;
    border-radius: 50%;
    background: #fff;

    &:checked {
        background: radial-gradient(circle, #1d1d1d 4px, #fff 5px);
    }
`;

const FieldRow = styled.div`
    height: ${props => props.$tall ? 46 : 40}px;
    display: flex;
    justify-content: space-between;
    padding-left: 63px;
`;

const FieldLabel = styled.label`
    align-self: center;
    color: ${props => props.$off ? '#7d7d7d' : '#111'};
`;

const field = css`
    width: 144px;
    height: 32px;
    padding: 0 4px 3px;
    border: 1px solid #8e8f93;
    background: #fff;

    &:disabled {
        border-color: #cfcfd2;
        background: #f0eff0;
    }
`;

const FieldInput = styled.input`
    ${field}
`;

const FieldSelect = styled.select`
    ${field}
    appearance: none;
    width: ${props => props.$wide ? 304 : 144}px;
    height: 38px;
`;

const Buttons = styled.div`
    display: flex;
    justify-content: center;
    gap: 32px;

    & + & {
        margin-top: 15px;
    }
`;

const PushButton = styled.button`
    width: ${props => props.$wide ? 320 : 106}px;
    height: 38px;
    padding: 0;
    border: 1px solid #6c6c6c;
    background: #dedddd;
`;

const StatusBar = styled.footer`
    flex: none;
    height: 33px;
    display: flex;
    align-items: center;
    border-top: 2px solid #8f8f8f;
    background: #f0eff1;
    font-family: "Liberation Sans", sans-serif;
    font-size: 15px;
`;

const StatusText = styled.span`
    flex: 1;
    padding: 4px 0 0 24px;
`;

const StatusPick = styled.div`
    position: relative;
    width: ${props => props.$width}px;
    height: 100%;
`;

const StatusSelect = styled.select`
    appearance: none;
    width: 100%;
    height: 100%;
    padding: 0 4px;
    border: 1px solid #9b9b9b;
    background: linear-gradient(#f2f2f2, #e5e5e5);
`;

const Chevron = styled.svg`
    position: absolute;
    top: 11px;
    right: 7px;
    width: 10px;
    height: 9px;
    fill: none;
    stroke: #444;
    stroke-width: 3px;
`;
